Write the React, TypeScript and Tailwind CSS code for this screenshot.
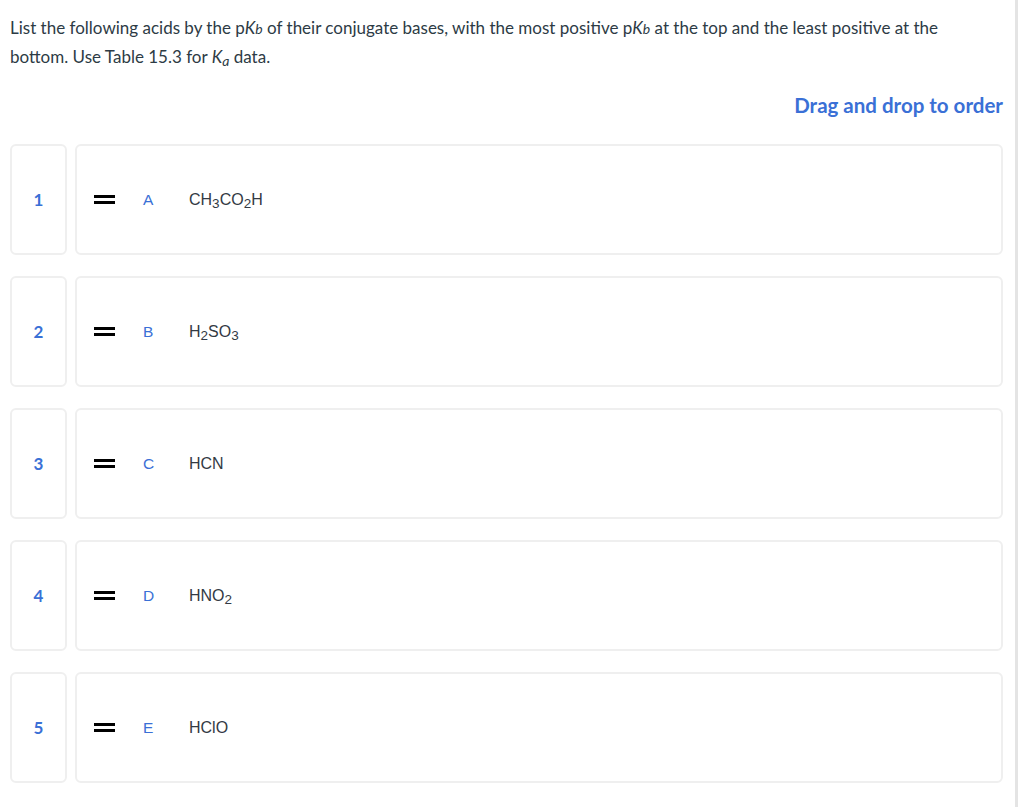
import React from "react";

type Item = { n: number; letter: string; formula: React.ReactNode };

const Sub = ({ children }: { children: React.ReactNode }) => (
  <span className="relative top-[3px] text-[13.5px]">{children}</span>
);

const items: Item[] = [
  { n: 1, letter: "A", formula: <>CH<Sub>3</Sub>CO<Sub>2</Sub>H</> },
  { n: 2, letter: "B", formula: <>H<Sub>2</Sub>SO<Sub>3</Sub></> },
  { n: 3, letter: "C", formula: <>HCN</> },
  { n: 4, letter: "D", formula: <>HNO<Sub>2</Sub></> },
  { n: 5, letter: "E", formula: <>HClO</> },
];

function Handle() {
  return (
    <div className="flex w-[21px] flex-col gap-[3px]">
      <div className="h-[3px] bg-black" />
      <div className="h-[3px] bg-black" />
    </div>
  );
}

export default function App() {
  return (
    <div className="flex h-[807px] w-[1024px] bg-white" style={{ fontFamily: "Lato, 'Open Sans', sans-serif" }}>
      <div className="w-[1015px] pl-[10px] pr-[12px]">
        <p className="pt-[14px] text-[17px] leading-[28px] text-[#2d3b45]">
          List the following acids by the p<i>K</i>
          <i className="text-[14px]">b</i> of their conjugate bases, with the most positive p<i>K</i>
          <i className="text-[14px]">b</i> at the top and the least positive at the
          <br />
          bottom. Use Table 15.3 for <i>K</i>
          <i className="relative top-[3px] text-[14px]">a</i> data.
        </p>
        <div className="mt-[20px] flex justify-end">
          <span className="text-[20.5px] font-bold leading-[26px] text-[#3a70d6]">Drag and drop to order</span>
        </div>
        <div className="mt-[26px] flex flex-col gap-[21px]">
          {items.map((it) => (
            <div key={it.n} className="flex h-[111px] gap-[8px]">
              <div className="flex w-[57px] items-center justify-center rounded-[6px] border-2 border-[#efefef] text-[17px] font-bold text-[#3a70d6]">
                {it.n}
              </div>
              <div className="flex flex-1 items-center rounded-[6px] border-2 border-[#efefef] pl-[17px]">
                <Handle />
                <span
                  className="ml-[28px] w-[46px] text-[15.5px] text-[#3a70d6]"
                  style={{ fontFamily: "'Liberation Sans', Arial, sans-serif" }}
                >
                  {it.letter}
                </span>
                <span
                  className="text-[16px] text-[#333a44]"
                  style={{ fontFamily: "'Liberation Sans', Arial, sans-serif" }}
                >
                  {it.formula}
                </span>
              </div>
            </div>
          ))}
        </div>
      </div>
      <div className="h-full w-[3px] bg-[#e4e4e4]" />
      <div className="flex-1" />
    </div>
  );
}
